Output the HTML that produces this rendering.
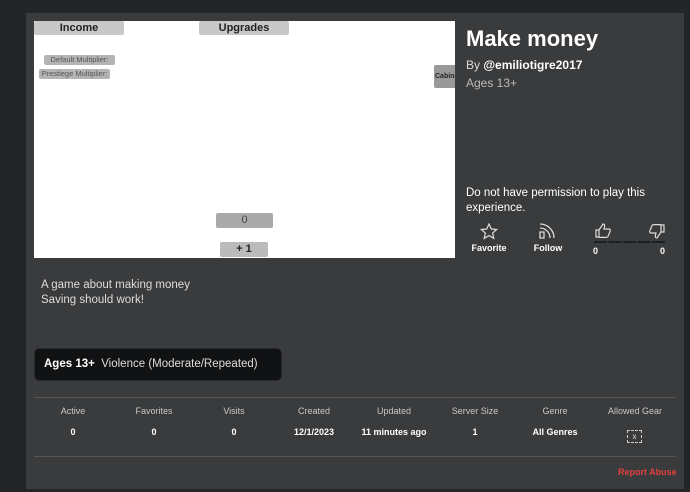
<!DOCTYPE html>
<html><head><meta charset="utf-8"><style>
*{margin:0;padding:0;box-sizing:border-box}
body{width:690px;height:492px;background:#232527;font-family:"Liberation Sans",sans-serif;position:relative;overflow:hidden;color:#fff}
.abs{position:absolute}
.panel{left:26px;top:13px;width:658px;height:476px;background:#393b3d}
.shot{left:34px;top:21px;width:421px;height:237px;background:#fff;overflow:hidden}
.g{position:absolute;background:#c8c8c8;border-radius:2px;color:#222;text-align:center;font-weight:bold;white-space:nowrap;overflow:hidden}
.s{font-size:7.5px;color:#555;font-weight:normal;background:#b4b4b4}
.lbl{font-size:9px;font-weight:bold;color:#fff;text-align:center}
.stat{top:406px;width:80px;text-align:center;font-size:9px;color:#c8c8c8}
.val{top:427px;width:80px;text-align:center;font-size:9px;color:#fff;font-weight:bold}
</style></head><body>
<div class="abs" style="left:176px;top:-5px;font-size:7px;color:#555">ADVERTISEMENT</div>
<div class="abs" style="left:632px;top:-7px;font-size:7px;color:#777">Report</div>
<div class="abs panel"></div>
<div class="abs shot">
  <div class="g" style="left:0;top:0;width:90px;height:14px;font-size:11px;line-height:14px">Income</div>
  <div class="g" style="left:165px;top:0;width:90px;height:14px;font-size:11px;line-height:14px">Upgrades</div>
  <div class="g s" style="left:10px;top:34px;width:71px;height:10px;line-height:10px">Default Multiplier:</div>
  <div class="g s" style="left:5px;top:48px;width:71px;height:10px;line-height:10px">Prestiege Multiplier:</div>
  <div class="g" style="left:400px;top:44px;width:24px;height:23px;background:#999;font-size:7px;line-height:23px;text-align:left;padding-left:1px">Cabino</div>
  <div class="g" style="left:182px;top:192px;width:57px;height:15px;background:#aaa;font-size:11px;line-height:15px;font-weight:normal;color:#444">0</div>
  <div class="g" style="left:186px;top:221px;width:48px;height:15px;background:#bbb;font-size:11px;line-height:15px;color:#222">+ 1</div>
</div>
<div class="abs" style="left:466px;top:26px;font-size:22px;font-weight:bold">Make money</div>
<div class="abs" style="left:466px;top:58px;font-size:12px;color:#ddd">By <b style="color:#fff">@emiliotigre2017</b></div>
<div class="abs" style="left:466px;top:76px;font-size:12px;color:#bbb">Ages 13+</div>
<div class="abs" style="left:466px;top:186px;width:220px;font-size:11.5px;line-height:15px">Do not have permission to play this experience.</div>
<svg class="abs" style="left:480px;top:223px" width="18" height="17" viewBox="0 0 18 17"><path d="M9 1l2.3 5 5.4.5-4.1 3.6 1.2 5.3L9 12.6l-4.8 2.8 1.2-5.3L1.3 6.5l5.4-.5z" fill="none" stroke="#ddd" stroke-width="1.2"/></svg>
<div class="abs lbl" style="left:465px;top:243px;width:48px">Favorite</div>
<svg class="abs" style="left:538px;top:222px" width="18" height="18" viewBox="0 0 18 18"><g fill="none" stroke="#ddd" stroke-width="1.3"><path d="M2 2a14 14 0 0 1 14 14"/><path d="M2 6a10 10 0 0 1 10 10"/><path d="M2 10h4v6H2z"/></g></svg>
<div class="abs lbl" style="left:528px;top:243px;width:40px">Follow</div>
<svg class="abs" style="left:594px;top:223px" width="18" height="16" viewBox="0 0 18 16"><path d="M2 7h3v7H2zM5 7l4-6c1.5 0 2 1 1.5 3L10 6h5c1.5 0 1.5 1.5 1 2.5l-2 5c-.4.7-1 .9-2 .9H5" fill="none" stroke="#ddd" stroke-width="1.2"/></svg>
<svg class="abs" style="left:648px;top:223px" width="18" height="16" viewBox="0 0 18 16"><path d="M16 9h-3V2h3zM13 9l-4 6c-1.5 0-2-1-1.5-3L8 10H3c-1.5 0-1.5-1.5-1-2.5l2-5c.4-.7 1-.9 2-.9h7" fill="none" stroke="#ddd" stroke-width="1.2"/></svg>
<div class="abs" style="left:594px;top:241px;width:72px;height:2px;background:repeating-linear-gradient(90deg,#1e1f21 0 13px,transparent 13px 14.5px)"></div>
<div class="abs" style="left:593px;top:246px;font-size:9px;font-weight:bold">0</div>
<div class="abs" style="left:660px;top:246px;font-size:9px;font-weight:bold">0</div>
<div class="abs" style="left:41px;top:278px;font-size:11.5px;line-height:15px;color:#ddd">A game about making money<br>Saving should work!</div>
<div class="abs" style="left:34px;top:348px;width:248px;height:33px;background:#111213;border-radius:5px;border:1px solid #2a2b2d"></div>
<div class="abs" style="left:44px;top:358px;font-size:11.5px"><b>Ages 13+</b>&nbsp;&nbsp;<span style="color:#ddd">Violence (Moderate/Repeated)</span></div>
<div class="abs" style="left:34px;top:397px;width:642px;height:1px;background:#555"></div>
<div class="abs stat" style="left:33px">Active</div><div class="abs val" style="left:33px">0</div>
<div class="abs stat" style="left:114px">Favorites</div><div class="abs val" style="left:114px">0</div>
<div class="abs stat" style="left:194px">Visits</div><div class="abs val" style="left:194px">0</div>
<div class="abs stat" style="left:274px">Created</div><div class="abs val" style="left:274px">12/1/2023</div>
<div class="abs stat" style="left:354px">Updated</div><div class="abs val" style="left:354px">11 minutes ago</div>
<div class="abs stat" style="left:435px">Server Size</div><div class="abs val" style="left:435px">1</div>
<div class="abs stat" style="left:515px">Genre</div><div class="abs val" style="left:515px">All Genres</div>
<div class="abs stat" style="left:595px">Allowed Gear</div>
<div class="abs" style="left:627px;top:430px;width:15px;height:13px;border:1px dashed #ccc;font-size:8px;text-align:center;line-height:11px;color:#ddd">x</div>
<div class="abs" style="left:34px;top:456px;width:642px;height:1px;background:#555"></div>
<div class="abs" style="left:618px;top:467px;font-size:9px;font-weight:bold;color:#e2403d">Report Abuse</div>
</body></html>
